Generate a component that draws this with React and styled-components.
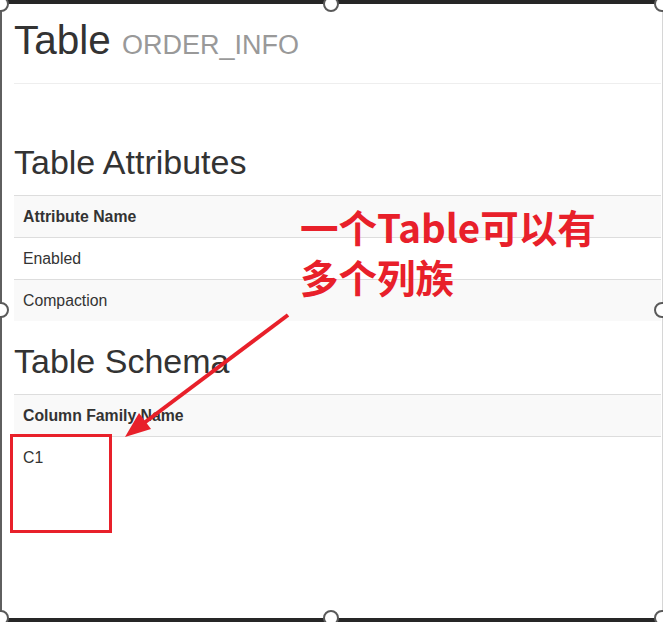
import styled, { createGlobalStyle } from 'styled-components'

const GlobalStyle = createGlobalStyle`
  html, body {
    margin: 0;
    padding: 0;
    background: #ffffff;
  }
  body {
    font-family: "Liberation Sans", Arial, sans-serif;
    color: #333333;
  }
`

const attributes = [
  { name: 'Attribute Name', head: true },
  { name: 'Enabled' },
  { name: 'Compaction', striped: true },
]

const families = [{ name: 'Column Family Name', head: true }, { name: 'C1' }]

const handles = [
  [1, 4],
  [331, 4],
  [662, 4],
  [1, 310],
  [662, 310],
  [1, 618],
  [331, 618],
  [662, 618],
]

function DataTable({ rows }) {
  return (
    <Table>
      <tbody>
        {rows.map((row) => (
          <Row key={row.name} $striped={row.head || row.striped}>
            <Cell $head={row.head}>{row.name}</Cell>
          </Row>
        ))}
      </tbody>
    </Table>
  )
}

function App() {
  return (
    <Stage>
      <GlobalStyle />
      <Frame>
        <PageHeader>
          <Title>
            Table <small>ORDER_INFO</small>
          </Title>
        </PageHeader>
        <SectionTitle $top={60.5}>Table Attributes</SectionTitle>
        <DataTable rows={attributes} />
        <SectionTitle $top={21.5}>Table Schema</SectionTitle>
        <DataTable rows={families} />
      </Frame>

      <Highlight />
      <Arrow width='663' height='622' viewBox='0 0 663 622'>
        <line x1='288' y1='315' x2='140' y2='426' />
        <polygon points='125,437 151,429 139,413' />
      </Arrow>
      <Note>
        一个Table可以有
        <br />
        多个列族
      </Note>

      {handles.map(([x, y]) => (
        <Handle key={`${x}-${y}`} style={{ left: x - 8, top: y - 8 }} />
      ))}
    </Stage>
  )
}

export default App

/////  Style  /////

const Stage = styled.div`
  position: relative;
  width: 663px;
  height: 622px;
  overflow: hidden;
`

const Frame = styled.div`
  box-sizing: border-box;
  width: 663px;
  height: 622px;
  border-top: 4px solid #262626;
  border-bottom: 4px solid #262626;
  border-left: 2px solid #5f5f5f;
  border-right: 1px solid #d6d6d6;
  padding: 14px 1px 0 12px;
`

const PageHeader = styled.div`
  padding-bottom: 20px;
  border-bottom: 1px solid #eeeeee;
`

const Title = styled.h1`
  margin: 0;
  font-size: 40.5px;
  font-weight: 400;
  line-height: 1.1;
  color: #333333;
  & small {
    font-size: 27px;
    color: #999999;
  }
`

const SectionTitle = styled.h2`
  margin: ${(p) => p.$top}px 0 14px;
  font-size: 34px;
  font-weight: 400;
  line-height: 1.1;
  color: #333333;
`

const Table = styled.table`
  width: 100%;
  border-collapse: collapse;
  border-spacing: 0;
`

const Row = styled.tr`
  background: ${(p) => (p.$striped ? '#f9f9f9' : '#ffffff')};
`

const Cell = styled.td`
  padding: 10px 9px;
  border-top: 1px solid #dddddd;
  font-size: 15.8px;
  line-height: 21px;
  font-weight: ${(p) => (p.$head ? 700 : 400)};
  color: #333333;
  text-align: left;
`

const Highlight = styled.div`
  position: absolute;
  left: 10px;
  top: 434px;
  width: 102px;
  height: 99px;
  box-sizing: border-box;
  border: 3px solid #e8202a;
`

const Arrow = styled.svg`
  position: absolute;
  left: 0;
  top: 0;
  pointer-events: none;
  & line {
    stroke: #e8202a;
    stroke-width: 4;
  }
  & polygon {
    fill: #e8202a;
  }
`

const Note = styled.div`
  position: absolute;
  left: 300px;
  top: 201px;
  font-family: "Noto Sans CJK SC", "Microsoft YaHei", sans-serif;
  font-size: 38.5px;
  font-weight: 700;
  line-height: 50px;
  color: #e8202a;
  white-space: nowrap;
`

const Handle = styled.div`
  position: absolute;
  width: 16px;
  height: 16px;
  box-sizing: border-box;
  border-radius: 50%;
  border: 2.5px solid #5a5a5a;
  background: #ffffff;
`
